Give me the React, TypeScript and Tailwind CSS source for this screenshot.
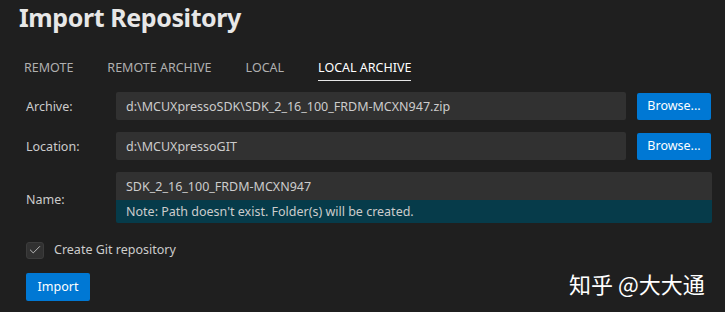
import { Check } from "lucide-react";

const tabs = ["REMOTE", "REMOTE ARCHIVE", "LOCAL", "LOCAL ARCHIVE"];

function Field({ label, value }: { label: string; value: string }) {
  return (
    <div className="flex items-center h-[28px]">
      <div className="w-[90px] pt-[2px] text-[12.5px] text-[#cccccc]">{label}</div>
      <div className="w-[510px] h-[28px] bg-[#313131] rounded-[2px] flex items-center pl-[10px] pt-[2px] text-[12.5px] text-[#cccccc]">
        {value}
      </div>
      <button className="ml-[11px] w-[74px] h-[27px] pt-[1px] bg-[#0078d4] rounded-[2px] text-[12.5px] text-white">Browse...</button>
    </div>
  );
}

export default function App() {
  return (
    <div className="relative w-[725px] h-[312px] overflow-hidden bg-[#1f1f1f] font-['Noto_Sans',sans-serif] text-[#cccccc]">
      <h1 className="pl-[19px] h-[34px] leading-[34px] text-[25px] font-bold text-[#e7e7e7] tracking-[-0.4px]">Import Repository</h1>

      {/* tabs */}
      <div className="flex gap-[34px] pl-[24px] mt-[23px]">
        {tabs.map((t, i) => (
          <div
            key={t}
            className={
              "h-[24px] leading-[21px] text-[12.5px] " +
              (i === 3 ? "text-white border-b border-[#e7e7e7]" : "text-[#b0b0b0]")
            }
          >
            {t}
          </div>
        ))}
      </div>

      <div className="pl-[26px] mt-[11px] flex flex-col">
        <Field label="Archive:" value="d:\MCUXpressoSDK\SDK_2_16_100_FRDM-MCXN947.zip" />
        <div className="mt-[12px]">
          <Field label="Location:" value="d:\MCUXpressoGIT" />
        </div>

        {/* name */}
        <div className="flex items-center mt-[12px]">
          <div className="w-[90px] pt-[5px] text-[12.5px] text-[#cccccc]">Name:</div>
          <div className="w-[596px] flex flex-col">
            <div className="h-[28px] bg-[#313131] rounded-t-[2px] flex items-center pl-[10px] pt-[2px] text-[12.5px] text-[#cccccc]">
              SDK_2_16_100_FRDM-MCXN947
            </div>
            <div className="h-[23px] bg-[#063b4a] rounded-b-[2px] flex items-center pl-[10px] pt-[1px] text-[12.5px] text-[#cccccc]">
              Note: Path doesn't exist. Folder(s) will be created.
            </div>
          </div>
        </div>

        {/* checkbox */}
        <div className="flex items-center mt-[18px] h-[18px]">
          <div className="w-[18px] h-[17px] bg-[#313131] rounded-[3px] border border-[#3c3c3c] flex items-center justify-center">
            <Check size={14} strokeWidth={1.5} className="text-[#cccccc]" />
          </div>
          <span className="ml-[10px] pt-[1px] text-[12.5px] text-[#cccccc]">Create Git repository</span>
        </div>

        <button className="mt-[14px] w-[64px] h-[28px] pt-[1px] bg-[#0078d4] rounded-[2px] text-[12.5px] text-white">Import</button>
      </div>

      <div className="absolute left-[569px] top-[267px] text-[22px] text-white font-['Noto_Sans_CJK_SC',sans-serif]">
        知乎 @大大通
      </div>
    </div>
  );
}
